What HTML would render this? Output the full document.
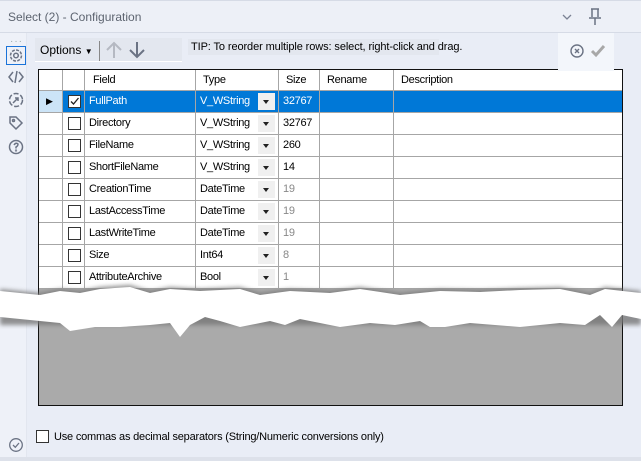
<!DOCTYPE html>
<html><head><meta charset="utf-8"><style>
*{margin:0;padding:0;box-sizing:border-box}
body{width:641px;height:461px;overflow:hidden;background:#e9edf6;font-family:"Liberation Sans",sans-serif;font-size:11px;color:#000;position:relative}
.abs{position:absolute}
.title{left:0;top:0;width:641px;height:33px;background:#edf0f7;border-bottom:1px solid #d6dbe6;border-top:1px solid #d6dbe6}
.title span{position:absolute;left:8px;top:9px;color:#5d6470;font-size:12px}
.side{left:0;top:33px;width:27px;height:424px;background:#eef1f8;border-right:1px solid #e2e6ef}
.grid{left:38px;top:69px;width:585px;height:337px;border:1px solid #111;background:#aaa;overflow:hidden}
.row{position:absolute;left:0;width:583px;height:22px;border-bottom:1px solid #a6a6a6;background:#fff}
.c{position:absolute;top:0;height:21px;border-right:1px solid #a6a6a6;line-height:21px;padding-left:4px;white-space:nowrap;overflow:hidden;letter-spacing:-0.3px}
.cb{position:absolute;left:5px;top:4px;width:13px;height:13px;border:1px solid #333;background:#fff}
.dd{position:absolute;left:62px;top:2px;width:17px;height:17px;background:#f0f0f0}
.dd:after{content:"";position:absolute;left:5px;top:7px;border:3px solid transparent;border-top:4px solid #222;}
</style></head><body>
<div class="abs title"><span>Select (2) - Configuration</span>
<svg class="abs" style="left:561px;top:12px" width="12" height="8"><path d="M2 2 L6 6 L10 2" fill="none" stroke="#7b8294" stroke-width="1.3"/></svg>
<svg class="abs" style="left:587px;top:7px" width="16" height="18"><path d="M4 1H12M5 1V9M11 1V9M2 10H14M8 10V17" fill="none" stroke="#6b7384" stroke-width="1.5"/></svg>
</div>
<div class="abs side"></div>
<div class="abs" style="left:10px;top:36px;color:#9aa;font-size:10px;letter-spacing:1px">···</div>
<div class="abs" style="left:6px;top:46px;width:20px;height:19px;border:1px solid #1a73d9"></div>
<svg class="abs" style="left:7px;top:46px" width="18" height="120" fill="none" stroke="#6b7384" stroke-width="1.5">
<circle cx="9" cy="9.5" r="2.3"/><circle cx="9" cy="9.5" r="5.5" stroke-dasharray="3 1.3"/>
<path d="M6 26 L2 31 L6 36 M12 26 L16 31 L12 36 M10 25 L8 37"/>
<circle cx="9" cy="54" r="6.5" stroke-dasharray="5 2"/><path d="M6 57 L11 52 M8 52H11V55"/>
<path d="M3 71 H9 L15 77 L9 83 L3 77 Z"/><circle cx="6.5" cy="74.5" r="1"/>
<circle cx="9" cy="101" r="6.5"/><path d="M7 99 Q9 96 11 98 Q11 100 9 101 V102.5"/><circle cx="9" cy="104.5" r=".4"/>
</svg>
<div class="abs" style="left:35px;top:38px;width:147px;height:24px;background:#e3e7ef;border-bottom:1px solid #fff"></div>
<div class="abs" style="left:40px;top:43px;font-size:12px">Options <span style="font-size:8px">▼</span></div>
<div class="abs" style="left:99px;top:41px;width:1px;height:20px;background:#888"></div>
<svg class="abs" style="left:105px;top:40px" width="46" height="20" fill="none" stroke-width="2"><path d="M9 18V3 M2 10 L9 3 L16 10" stroke="#b5b9c2"/><path d="M32 2V17 M25 10 L32 17 L39 10" stroke="#6b7384"/></svg>
<div class="abs" style="left:188px;top:39px;width:251px;height:16px;background:#e3e7ef"></div>
<div class="abs" style="left:191px;top:41px;font-size:11px;letter-spacing:-0.1px">TIP: To reorder multiple rows: select, right-click and drag.</div>
<div class="abs grid">
<div class="row" style="top:0;height:21px;border-bottom:1px solid #a6a6a6">
<div class="c" style="left:0;width:24px"></div><div class="c" style="left:24px;width:22px"></div>
<div class="c" style="left:46px;width:111px;padding-left:8px">Field</div><div class="c" style="left:157px;width:83px;padding-left:7px">Type</div>
<div class="c" style="left:240px;width:41px;padding-left:7px">Size</div><div class="c" style="left:281px;width:74px;padding-left:7px">Rename</div><div class="c" style="left:355px;width:228px;border:0;padding-left:7px">Description</div></div>
</div>
<div class="abs" style="left:558px;top:33px;width:56px;height:38px;background:#f3f6fb"></div>
<svg class="abs" style="left:568px;top:42px" width="40" height="18"><circle cx="9" cy="9" r="6" fill="none" stroke="#6b7384" stroke-width="1.4"/><path d="M7 7L11 11M11 7L7 11" stroke="#6b7384" stroke-width="1.4"/><path d="M24 9 L28 13 L36 4" fill="none" stroke="#a8a8a8" stroke-width="3"/></svg>
<script>
var d=[["FullPath","V_WString","32767"],["Directory","V_WString","32767"],["FileName","V_WString","260"],["ShortFileName","V_WString","14"],["CreationTime","DateTime","19",1],["LastAccessTime","DateTime","19",1],["LastWriteTime","DateTime","19",1],["Size","Int64","8",1],["AttributeArchive","Bool","1",1]];
var g=document.querySelector('.grid'),h='';
d.forEach(function(r,i){var s=i==0;var bg=s?'#0078d7':'#fff',fc=s?'#fff':'#000';
h+='<div class="row" style="top:'+(21+i*22)+'px">'+
'<div class="c" style="left:0;width:24px;background:'+(s?'#cce4f7':'#fff')+'">'+(s?'<span style="position:absolute;left:7px;top:0;font-size:9px">▶</span>':'')+'</div>'+
'<div class="c" style="left:24px;width:22px;background:'+bg+'"><div class="cb">'+(s?'<svg width="11" height="11" style="position:absolute;left:0;top:0"><path d="M2 5.5L4.5 8L9.5 2" fill="none" stroke="#222" stroke-width="1.3"/></svg>':'')+'</div></div>'+
'<div class="c" style="left:46px;width:111px;background:'+bg+';color:'+fc+'">'+r[0]+'</div>'+
'<div class="c" style="left:157px;width:83px;background:'+bg+';color:'+fc+'">'+r[1]+'<div class="dd"></div></div>'+
'<div class="c" style="left:240px;width:41px;background:'+bg+'"><span style="color:'+(r[3]?'#888':fc)+'">'+r[2]+'</span></div>'+
'<div class="c" style="left:281px;width:74px;background:'+bg+'"></div><div class="c" style="left:355px;width:228px;border:0;background:'+bg+'"></div></div>';});
g.insertAdjacentHTML('beforeend',h);
</script>
<svg class="abs" style="left:0;top:275px" width="641" height="75">
<defs><filter id="sh"><feGaussianBlur stdDeviation="2"/></filter></defs>
<path d="M0 14 L40 18 L60 14 L80 16 L100 12 L130 10 L150 16 L170 12 L200 14 L240 12 L260 18 L290 14 L330 16 L360 12 L400 18 L440 14 L480 15 L520 13 L560 12 L590 18 L605 12 L641 16 L641 50 L0 50 Z" fill="#777" filter="url(#sh)" opacity=".8"/>
<path d="M0 16 L40 20 L60 16 L80 18 L100 14 L130 12 L150 18 L170 14 L200 16 L240 14 L260 20 L290 16 L330 18 L360 14 L400 20 L440 16 L480 17 L520 15 L560 14 L590 20 L605 14 L641 18 L641 44 L622 40 L612 52 L600 40 L585 50 L560 48 L520 52 L495 50 L470 48 L445 52 L430 52 L420 46 L395 50 L370 48 L340 52 L320 48 L300 44 L285 50 L270 46 L240 52 L220 46 L205 42 L190 50 L180 62 L170 48 L150 50 L120 52 L95 52 L70 56 L60 48 L40 46 L20 44 L0 42 Z" fill="#fff"/>
</svg>
<div class="abs" style="left:36px;top:430px;width:13px;height:13px;border:1px solid #333;background:#fff"></div>
<div class="abs" style="left:54px;top:431px;letter-spacing:-0.2px">Use commas as decimal separators (String/Numeric conversions only)</div>
<svg class="abs" style="left:8px;top:437px" width="16" height="16"><circle cx="8" cy="8" r="6.3" fill="none" stroke="#6b7384" stroke-width="1.3"/><path d="M5 8L7.3 10.3L11 6" fill="none" stroke="#6b7384" stroke-width="1.3"/></svg>
<div class="abs" style="left:0;top:457px;width:641px;height:4px;background:#dde1ea"></div>
</body></html>
